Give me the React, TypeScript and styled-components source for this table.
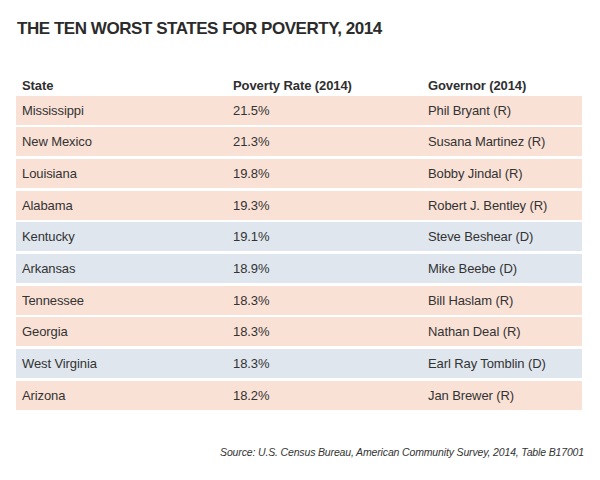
import styled, { createGlobalStyle } from 'styled-components';

const GlobalStyle = createGlobalStyle`
  body {
    margin: 0;
    background: #fff;
    font-family: "Liberation Sans", Arial, sans-serif;
    color: #333;
  }
`;

type Party = 'R' | 'D';

const rows: { state: string; rate: string; governor: string; party: Party }[] = [
  { state: 'Mississippi', rate: '21.5%', governor: 'Phil Bryant', party: 'R' },
  { state: 'New Mexico', rate: '21.3%', governor: 'Susana Martinez', party: 'R' },
  { state: 'Louisiana', rate: '19.8%', governor: 'Bobby Jindal', party: 'R' },
  { state: 'Alabama', rate: '19.3%', governor: 'Robert J. Bentley', party: 'R' },
  { state: 'Kentucky', rate: '19.1%', governor: 'Steve Beshear', party: 'D' },
  { state: 'Arkansas', rate: '18.9%', governor: 'Mike Beebe', party: 'D' },
  { state: 'Tennessee', rate: '18.3%', governor: 'Bill Haslam', party: 'R' },
  { state: 'Georgia', rate: '18.3%', governor: 'Nathan Deal', party: 'R' },
  { state: 'West Virginia', rate: '18.3%', governor: 'Earl Ray Tomblin', party: 'D' },
  { state: 'Arizona', rate: '18.2%', governor: 'Jan Brewer', party: 'R' },
];

const Page = styled.div`
  width: 600px;
  height: 480px;
  padding: 20px 0 0 16px;
  box-sizing: border-box;
`;

const Title = styled.h1`
  margin: 0 0 0 1px;
  font-size: 17px;
  line-height: 18px;
  font-weight: 700;
  letter-spacing: -0.45px;
  color: #2b2b2b;
  white-space: nowrap;
`;

const Table = styled.div`
  margin-top: 39px;
  width: 566px;
  display: flex;
  flex-direction: column;
  gap: 2.67px;
`;

const Row = styled.div<{ $party?: Party }>`
  display: grid;
  grid-template-columns: 211px 195px 1fr;
  align-items: center;
  height: 29px;
  padding-left: 6px;
  background: ${(p) => (p.$party === 'D' ? '#dfe6ee' : '#fae1d6')};
  font-size: 13px;
  letter-spacing: -0.1px;
  color: #333;
  white-space: nowrap;
`;

const HeadRow = styled(Row)`
  height: 16px;
  background: transparent;
  font-weight: 700;
  color: #2f2f2f;
`;

const Source = styled.p`
  margin: 36px 0 0;
  width: 568px;
  text-align: right;
  font-size: 10.5px;
  letter-spacing: -0.15px;
  font-style: italic;
  color: #333;
`;

export default function App() {
  return (
    <>
      <GlobalStyle />
      <Page>
        <Title>THE TEN WORST STATES FOR POVERTY, 2014</Title>
        <Table>
          <HeadRow>
            <span>State</span>
            <span>Poverty Rate (2014)</span>
            <span>Governor (2014)</span>
          </HeadRow>
          {rows.map((r) => (
            <Row key={r.state} $party={r.party}>
              <span>{r.state}</span>
              <span>{r.rate}</span>
              <span>
                {r.governor} ({r.party})
              </span>
            </Row>
          ))}
        </Table>
        <Source>Source: U.S. Census Bureau, American Community Survey, 2014, Table B17001</Source>
      </Page>
    </>
  );
}
